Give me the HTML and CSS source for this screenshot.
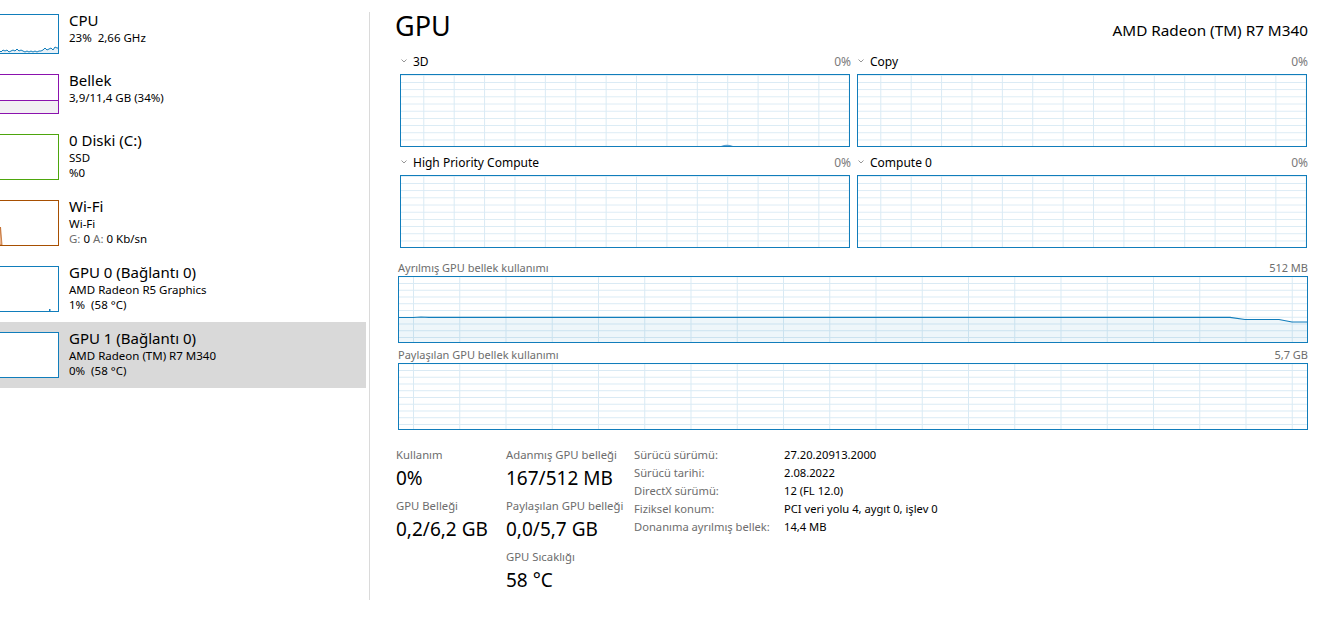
FILE: index.html
```html
<!DOCTYPE html>
<html lang="tr">
<head>
    <meta charset="UTF-8">
    <title>Performans - GPU</title>
    <link rel="stylesheet" href="styles.css">
</head>
<body>
    <div class="app">
        <aside class="sidebar">
            <div class="perf-item">
                <div class="thumb thumb-cpu">
                    <svg viewBox="0 0 59 38" preserveAspectRatio="none">
                        <polygon fill="#e8f1f8" points="0,38 0,35 2,37 4,35 6,36 8,35 10,37 12,36 14,35 16,36 18,34 20,36 22,35 24,36 26,37 28,36 30,37 32,36 34,37 36,36 38,37 40,36 42,36 44,35 46,33 48,35 50,34 52,33 54,35 56,32 58,33 59,33 59,38"/>
                        <polyline fill="none" stroke="#117dbb" stroke-width="1" points="0,35 2,37 4,35 6,36 8,35 10,37 12,36 14,35 16,36 18,34 20,36 22,35 24,36 26,37 28,36 30,37 32,36 34,37 36,36 38,37 40,36 42,36 44,35 46,33 48,35 50,34 52,33 54,35 56,32 58,33 59,33"/>
                    </svg>
                </div>
                <div class="perf-text">
                    <div class="perf-title">CPU</div>
                    <div class="perf-sub">23%&nbsp; 2,66 GHz</div>
                </div>
            </div>

            <div class="perf-item">
                <div class="thumb thumb-mem">
                    <svg viewBox="0 0 59 38" preserveAspectRatio="none">
                        <rect x="0" y="25" width="59" height="13" fill="#f2eff3"/>
                        <line x1="0" y1="25.5" x2="59" y2="25.5" stroke="#8b12ae" stroke-width="1"/>
                    </svg>
                </div>
                <div class="perf-text">
                    <div class="perf-title">Bellek</div>
                    <div class="perf-sub">3,9/11,4 GB (34%)</div>
                </div>
            </div>

            <div class="perf-item">
                <div class="thumb tall thumb-disk"></div>
                <div class="perf-text">
                    <div class="perf-title">0 Diski (C:)</div>
                    <div class="perf-sub">SSD</div>
                    <div class="perf-sub">%0</div>
                </div>
            </div>

            <div class="perf-item">
                <div class="thumb tall thumb-net">
                    <svg viewBox="0 0 59 44" preserveAspectRatio="none">
                        <polygon fill="#e9b48e" stroke="#c0692a" stroke-width="0.8" points="0,44 1.5,26 3,44"/>
                    </svg>
                </div>
                <div class="perf-text">
                    <div class="perf-title">Wi-Fi</div>
                    <div class="perf-sub">Wi-Fi</div>
                    <div class="perf-sub"><span class="muted">G:</span> 0 <span class="muted">A:</span> 0 Kb/sn</div>
                </div>
            </div>

            <div class="perf-item">
                <div class="thumb tall thumb-gpu">
                    <svg viewBox="0 0 59 44" preserveAspectRatio="none">
                        <rect x="50" y="42" width="1.5" height="2" fill="#117dbb"/>
                    </svg>
                </div>
                <div class="perf-text">
                    <div class="perf-title">GPU 0 (Bağlantı 0)</div>
                    <div class="perf-sub">AMD Radeon R5 Graphics</div>
                    <div class="perf-sub">1%&nbsp; (58 °C)</div>
                </div>
            </div>

            <div class="perf-item selected">
                <div class="thumb tall thumb-gpu"></div>
                <div class="perf-text">
                    <div class="perf-title">GPU 1 (Bağlantı 0)</div>
                    <div class="perf-sub">AMD Radeon (TM) R7 M340</div>
                    <div class="perf-sub">0%&nbsp; (58 °C)</div>
                </div>
            </div>
        </aside>

        <div class="divider"></div>

        <main class="panel">
            <header class="panel-header">
                <h1>GPU</h1>
                <div class="adapter">AMD Radeon (TM) R7 M340</div>
            </header>

            <div class="engine-grid">
                <section class="engine">
                    <div class="engine-head">
                        <svg class="chev" viewBox="0 0 6 4"><polyline points="0.5,0.5 3,3 5.5,0.5" fill="none" stroke="#8a8a8a" stroke-width="0.9"/></svg>
                        <span>3D</span>
                        <span class="engine-pct">0%</span>
                    </div>
                    <div class="graph">
                        <svg viewBox="0 0 448 71" preserveAspectRatio="none">
                            <path d="M320 71 Q326 68.6 332 71 Z" fill="#5b9fcf"/>
                        </svg>
                    </div>
                </section>
                <section class="engine">
                    <div class="engine-head">
                        <svg class="chev" viewBox="0 0 6 4"><polyline points="0.5,0.5 3,3 5.5,0.5" fill="none" stroke="#8a8a8a" stroke-width="0.9"/></svg>
                        <span>Copy</span>
                        <span class="engine-pct">0%</span>
                    </div>
                    <div class="graph"></div>
                </section>
                <section class="engine">
                    <div class="engine-head">
                        <svg class="chev" viewBox="0 0 6 4"><polyline points="0.5,0.5 3,3 5.5,0.5" fill="none" stroke="#8a8a8a" stroke-width="0.9"/></svg>
                        <span>High Priority Compute</span>
                        <span class="engine-pct">0%</span>
                    </div>
                    <div class="graph"></div>
                </section>
                <section class="engine">
                    <div class="engine-head">
                        <svg class="chev" viewBox="0 0 6 4"><polyline points="0.5,0.5 3,3 5.5,0.5" fill="none" stroke="#8a8a8a" stroke-width="0.9"/></svg>
                        <span>Compute 0</span>
                        <span class="engine-pct">0%</span>
                    </div>
                    <div class="graph"></div>
                </section>
            </div>

            <section class="mem mem-dedicated">
                <div class="mem-head">
                    <span>Ayrılmış GPU bellek kullanımı</span>
                    <span>512 MB</span>
                </div>
                <div class="graph graph-mem">
                    <svg viewBox="0 0 908 65" preserveAspectRatio="none">
                        <path d="M0 40.5 L14 40.5 L22 40 L30 40.3 L831 40.3 L846 42.5 L880 42.5 L893 45 L908 45 L908 65 L0 65 Z" fill="rgba(17,125,187,0.07)"/>
                        <path d="M0 40.5 L14 40.5 L22 40 L30 40.3 L831 40.3 L846 42.5 L880 42.5 L893 45 L908 45" fill="none" stroke="#117dbb" stroke-width="1.2"/>
                    </svg>
                </div>
            </section>

            <section class="mem mem-shared">
                <div class="mem-head">
                    <span>Paylaşılan GPU bellek kullanımı</span>
                    <span>5,7 GB</span>
                </div>
                <div class="graph graph-mem"></div>
            </section>

            <div class="stats">
                <div class="stat-col col-usage">
                    <div class="stat">
                        <div class="stat-label">Kullanım</div>
                        <div class="stat-value">0%</div>
                    </div>
                    <div class="stat">
                        <div class="stat-label">GPU Belleği</div>
                        <div class="stat-value">0,2/6,2 GB</div>
                    </div>
                </div>
                <div class="stat-col col-memory">
                    <div class="stat">
                        <div class="stat-label">Adanmış GPU belleği</div>
                        <div class="stat-value">167/512 MB</div>
                    </div>
                    <div class="stat">
                        <div class="stat-label">Paylaşılan GPU belleği</div>
                        <div class="stat-value">0,0/5,7 GB</div>
                    </div>
                    <div class="stat">
                        <div class="stat-label">GPU Sıcaklığı</div>
                        <div class="stat-value">58 °C</div>
                    </div>
                </div>
                <div class="info">
                    <span class="info-key">Sürücü sürümü:</span><span>27.20.20913.2000</span>
                    <span class="info-key">Sürücü tarihi:</span><span>2.08.2022</span>
                    <span class="info-key">DirectX sürümü:</span><span>12 (FL 12.0)</span>
                    <span class="info-key">Fiziksel konum:</span><span>PCI veri yolu 4, aygıt 0, işlev 0</span>
                    <span class="info-key">Donanıma ayrılmış bellek:</span><span>14,4 MB</span>
                </div>
            </div>
        </main>
    </div>
</body>
</html>
```

FILE: styles.css
```css
* {
    box-sizing: border-box;
}

body {
    margin: 0;
    background-color: #fff;
    color: #000;
    font-family: 'Noto Sans', 'Open Sans', sans-serif;
    overflow: hidden;
}

.app {
    display: flex;
    height: 617px;
}

/* left list */
.sidebar {
    width: 366px;
    flex-shrink: 0;
    padding-top: 4px;
}

.perf-item {
    display: flex;
    align-items: flex-start;
    gap: 10px;
    padding: 10px 0;
}

.perf-item.selected {
    background-color: #d9d9d9;
}

.thumb {
    width: 61px;
    height: 40px;
    margin-left: -2px;
    flex-shrink: 0;
    border: 1px solid;
    background-color: #fff;
}

.thumb.tall {
    height: 46px;
}

.thumb svg {
    display: block;
    width: 100%;
    height: 100%;
}

.thumb-cpu,
.thumb-gpu {
    border-color: #117dbb;
}

.thumb-mem {
    border-color: #8b12ae;
}

.thumb-disk {
    border-color: #4da60c;
}

.thumb-net {
    border-color: #a74f01;
}

.perf-text {
    margin: -4px 0 -8px;
}

.perf-title {
    font-size: 15px;
}

.perf-sub {
    font-size: 11.5px;
}

.muted {
    color: #6d6d6d;
}

.divider {
    width: 1px;
    margin: 12px 0 17px 3px;
    background-color: #dadada;
}

/* right panel */
.panel {
    flex: 1;
    padding: 9px 21px 0 28px;
}

.panel-header {
    display: flex;
    justify-content: space-between;
    align-items: baseline;
    margin-bottom: 8px;
}

.panel-header h1 {
    margin: 0 0 0 -3px;
    font-size: 27px;
    font-weight: 400;
    line-height: 34px;
}

.adapter {
    font-size: 15.3px;
}

.engine-grid {
    display: grid;
    grid-template-columns: 1fr 1fr;
    column-gap: 7px;
    row-gap: 5px;
    margin: 0 1px 0 2px;
}

.engine-head {
    display: flex;
    align-items: center;
    height: 20px;
    margin-bottom: 3px;
    font-size: 12px;
}

.chev {
    width: 6px;
    height: 4px;
    margin: 0 6px 0 1px;
}

.engine-pct {
    margin-left: auto;
    margin-right: -1px;
    color: #7a7a7a;
}

.graph {
    height: 73px;
    border: 1px solid #117dbb;
    background-color: #fff;
    background-image:
        linear-gradient(to right, #d9eaf4 1px, transparent 1px),
        linear-gradient(to bottom, #d9eaf4 1px, transparent 1px);
    background-size: 30.4px 100%, 100% 7.2px;
    background-position: 22.3px 0, 0 7px;
}

.graph svg {
    display: block;
    width: 100%;
    height: 100%;
}

.graph-mem {
    height: 67px;
    background-size: 46.26px 100%, 100% 6.75px;
    background-position: 14px 0, 0 6px;
}

.mem-head {
    display: flex;
    justify-content: space-between;
    font-size: 11px;
    line-height: 16px;
    color: #6d6d6d;
}

.mem-dedicated {
    margin-top: 12px;
}

.mem-shared {
    margin-top: 4px;
}

/* numbers under the graphs */
.stats {
    display: flex;
    margin: 17px 0 0 -2px;
}

.col-usage {
    width: 110px;
}

.col-memory {
    width: 128px;
}

.stat + .stat {
    margin-top: 7px;
}

.stat-label {
    font-size: 11.3px;
    line-height: 16px;
    color: #6d6d6d;
}

.stat-value {
    margin-top: 2px;
    font-size: 19px;
    line-height: 26px;
}

.info {
    display: grid;
    grid-template-columns: 150px auto;
    align-content: start;
    margin-top: -1px;
    font-size: 11.2px;
    line-height: 18px;
}

.info-key {
    color: #6d6d6d;
}
```
